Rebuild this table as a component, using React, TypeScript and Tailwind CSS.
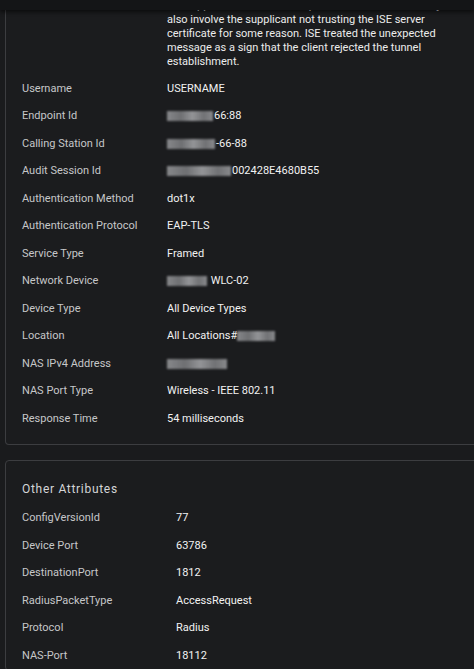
import React from "react";

const Blur = ({ w }: { w: number }) => (
  <span
    className="inline-block h-[10px] align-middle bg-[linear-gradient(90deg,#9a9b9e_0%,#7d7e81_30%,#a9aaad_55%,#808184_80%,#9c9da0_100%)] blur-[1.2px] opacity-85 mr-[1px]"
    style={{ width: w }}
  />
);

type Row = { label: string; value: React.ReactNode };

const rows1: Row[] = [
  { label: "Username", value: "USERNAME" },
  { label: "Endpoint Id", value: (<><Blur w={46} />66:88</>) },
  { label: "Calling Station Id", value: (<><Blur w={48} />-66-88</>) },
  { label: "Audit Session Id", value: (<><Blur w={64} />002428E4680B55</>) },
  { label: "Authentication Method", value: "dot1x" },
  { label: "Authentication Protocol", value: "EAP-TLS" },
  { label: "Service Type", value: "Framed" },
  { label: "Network Device", value: (<><Blur w={40} /> WLC-02</>) },
  { label: "Device Type", value: "All Device Types" },
  { label: "Location", value: (<>All Locations#<Blur w={38} /></>) },
  { label: "NAS IPv4 Address", value: <Blur w={60} /> },
  { label: "NAS Port Type", value: "Wireless - IEEE 802.11" },
  { label: "Response Time", value: "54 milliseconds" },
];

const rows2: Row[] = [
  { label: "ConfigVersionId", value: "77" },
  { label: "Device Port", value: "63786" },
  { label: "DestinationPort", value: "1812" },
  { label: "RadiusPacketType", value: "AccessRequest" },
  { label: "Protocol", value: "Radius" },
  { label: "NAS-Port", value: "18112" },
];

const para = [
  "the supplicant could not complete the TLS tunnel. It may",
  "also involve the supplicant not trusting the ISE server",
  "certificate for some reason. ISE treated the unexpected",
  "message as a sign that the client rejected the tunnel",
  "establishment.",
];

export default function App() {
  return (
    <div
      className="relative w-[474px] h-[669px] overflow-hidden bg-[#1a1b1d] text-[11px]"
      style={{ fontFamily: "Roboto, 'Liberation Sans', sans-serif" }}
    >
      <div className="absolute left-0 top-0 w-full h-[10px] bg-[#141517] shadow-[0_2px_4px_rgba(0,0,0,0.6)] z-10" />
      <div className="w-[500px] pl-[5px] -mt-[1px]">
        <div className="border border-[#3c3d40] rounded-b-[4px] border-t-0 bg-[#1b1c1e] pl-[16px] pb-[11px]">
          <div className="grid grid-cols-[145px_1fr] pb-[6px]">
            <div />
            <div className="text-[#ececec] leading-[14px]">
              {para.map((l) => (
                <div key={l} className="whitespace-nowrap">{l}</div>
              ))}
            </div>
          </div>
          {rows1.map((r) => (
            <div key={r.label} className="grid grid-cols-[145px_1fr] h-[27.5px] items-center">
              <div className="text-[#c6c7c9]">{r.label}</div>
              <div className="text-[#f2f2f2]">{r.value}</div>
            </div>
          ))}
        </div>
        <div className="mt-[15px] border border-[#3c3d40] rounded-[4px] bg-[#1b1c1e] pl-[16px] pt-[20px]">
          <div className="text-[12px] font-normal tracking-[0.7px] text-[#d4d5d7] leading-[16px] mb-[8px]">
            Other Attributes
          </div>
          {rows2.map((r) => (
            <div key={r.label} className="grid grid-cols-[154px_1fr] h-[27.5px] items-center">
              <div className="text-[#c6c7c9]">{r.label}</div>
              <div className="text-[#f2f2f2]">{r.value}</div>
            </div>
          ))}
        </div>
      </div>
    </div>
  );
}
